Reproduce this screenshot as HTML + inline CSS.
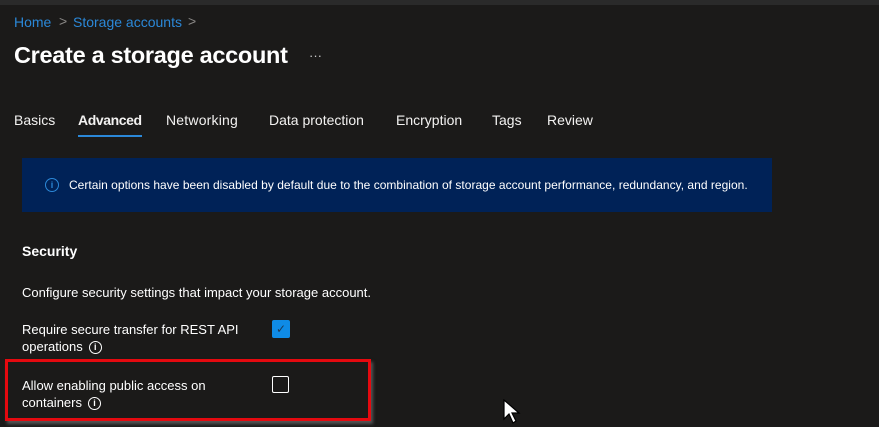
<!DOCTYPE html>
<html><head><style>
body{margin:0;width:879px;height:427px;background:#1b1a19;font-family:"Liberation Sans",sans-serif;color:#fff;position:relative;overflow:hidden}
.a{position:absolute;white-space:nowrap}
.topbar{position:absolute;left:0;top:0;width:879px;height:5px;background:#2a2a2a}
.bc{color:#2b88d8;font-size:14px;top:14px}
.tab{font-size:14px;top:112px;color:#f3f2f1}
.info{display:inline-block;width:11px;height:11px;border:1.3px solid #fff;border-radius:50%;font-size:9px;line-height:11px;text-align:center;font-weight:bold;vertical-align:middle;margin-left:6px}
</style></head><body>
<div class="topbar"></div>
<div class="a bc" style="left:14px">Home</div>
<div class="a" style="left:59px;top:13px;color:#8a8886;font-size:14px">&gt;</div>
<div class="a bc" style="left:73px">Storage accounts</div>
<div class="a" style="left:188px;top:13px;color:#8a8886;font-size:14px">&gt;</div>
<div class="a" style="left:14px;top:42px;font-size:23.5px;font-weight:600;letter-spacing:-0.3px">Create a storage account</div>
<div class="a" style="left:309px;top:48px;font-size:13px;color:#ccc">···</div>
<div class="a tab" style="left:14px">Basics</div>
<div class="a tab" style="left:78px;font-weight:bold;letter-spacing:-0.4px">Advanced</div>
<div class="a" style="left:78px;top:135px;width:64px;height:2px;background:#2b88d8"></div>
<div class="a tab" style="left:166px;letter-spacing:0.2px">Networking</div>
<div class="a tab" style="left:269px">Data protection</div>
<div class="a tab" style="left:396px">Encryption</div>
<div class="a tab" style="left:492px">Tags</div>
<div class="a tab" style="left:547px">Review</div>
<div class="a" style="left:22px;top:158px;width:750px;height:54px;background:#002257"></div>
<div class="a" style="left:45px;top:178px;width:12px;height:12px;border:1.3px solid #2b88d8;border-radius:50%;color:#2b88d8;font-size:9px;line-height:12px;text-align:center;font-weight:bold">i</div>
<div class="a" style="left:69px;top:178px;font-size:12px;letter-spacing:0.02px">Certain options have been disabled by default due to the combination of storage account performance, redundancy, and region.</div>
<div class="a" style="left:22px;top:243px;font-size:14px;font-weight:bold">Security</div>
<div class="a" style="left:22px;top:285px;font-size:13px">Configure security settings that impact your storage account.</div>
<div class="a" style="left:22px;top:321px;font-size:13px;line-height:17px">Require secure transfer for REST API<br>operations<span class="info">i</span></div>
<div class="a" style="left:272px;top:320px;width:18px;height:18px;background:#0f8be6;border-radius:2px;color:#1b3a5a;font-size:12px;line-height:18px;text-align:center">✓</div>
<div class="a" style="left:5px;top:359px;width:360px;height:56px;border:3px solid #e5090f;box-shadow:2px 3px 3px #555"></div>
<div class="a" style="left:22px;top:377px;font-size:13px;line-height:17px">Allow enabling public access on<br>containers<span class="info">i</span></div>
<div class="a" style="left:272px;top:376px;width:15px;height:15px;border:1.5px solid #fff;border-radius:2px"></div>
<svg class="a" style="left:503px;top:399px" width="20" height="26" viewBox="0 0 20 26"><path d="M1 1 L1 20 L6 15 L10 24 L13 22 L9 14 L16 14 Z" fill="#fff" stroke="#000" stroke-width="1.2"/></svg>
</body></html>
